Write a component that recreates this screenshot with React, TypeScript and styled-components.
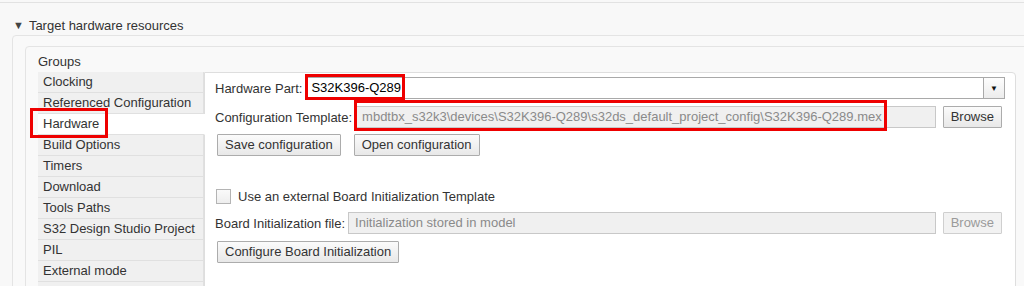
import React from 'react';
import styled, { createGlobalStyle } from 'styled-components';

const GlobalStyle = createGlobalStyle`
  html, body {
    margin: 0;
    padding: 0;
    background: #f8f8f8;
    overflow: hidden;
  }
  body {
    font-family: "Liberation Sans", Arial, sans-serif;
    font-size: 13px;
    color: #333;
  }
`;

const Page = styled.div`
  width: 1024px;
  height: 286px;
  overflow: hidden;
  padding-top: 2px;
  box-sizing: border-box;
`;

const TopRule = styled.div`
  border-top: 1px solid #e2e2e2;
  height: 12px;
`;

const SectionHeader = styled.div`
  display: flex;
  align-items: center;
  gap: 5px;
  height: 20px;
  padding-left: 13px;
  color: #333;
`;

const Caret = styled.span`
  font-size: 11px;
  color: #444;
`;

const OuterPanel = styled.div`
  margin: 0 -30px 0 12px;
  border: 1px solid #e4e4e4;
  border-radius: 4px;
  background: #f9f9f9;
  padding: 10px 0 0 12px;
  height: 260px;
`;

const InnerPanel = styled.div`
  border: 1px solid #e4e4e4;
  border-radius: 4px;
  background: #f9f9f9;
  padding: 6px 36px 0 12px;
  height: 260px;
`;

const GroupsTitle = styled.div`
  height: 19px;
  line-height: 18px;
  color: #333;
`;

const Body = styled.div`
  display: flex;
  align-items: flex-start;
`;

const GroupList = styled.ul`
  list-style: none;
  margin: 0;
  padding: 0;
  width: 166px;
  flex: none;
`;

const GroupItem = styled.li<{ $active?: boolean }>`
  position: relative;
  height: 20px;
  line-height: 20px;
  padding-left: 5px;
  background: ${p => (p.$active ? '#ffffff' : '#f0f0f0')};
  border-bottom: 1px solid #e0e0e0;
  border-right: 1px solid ${p => (p.$active ? '#ffffff' : '#e0e0e0')};
  color: #333;
  white-space: nowrap;
  margin-right: ${p => (p.$active ? '-1px' : '0')};
  z-index: ${p => (p.$active ? 2 : 1)};
`;

const Mark = styled.span<{ $top: number; $left: number; $right: number; $bottom: number }>`
  position: absolute;
  top: ${p => p.$top}px;
  left: ${p => p.$left}px;
  right: ${p => p.$right}px;
  bottom: ${p => p.$bottom}px;
  border: 3px solid #ee0000;
  pointer-events: none;
  z-index: 5;
`;

const ContentPanel = styled.div`
  flex: 1;
  background: #ffffff;
  border: 1px solid #dedede;
  border-radius: 0 4px 0 0;
  padding: 4px 10px 0 10px;
  height: 240px;
`;

const FieldRow = styled.div<{ $gapTop?: number }>`
  display: flex;
  align-items: center;
  gap: 7px;
  height: 22px;
  margin-top: ${p => p.$gapTop ?? 7}px;
`;

const LabelledField = styled.div`
  display: flex;
  align-items: center;
  flex: 1;
  min-width: 0;
`;

const Label = styled.span`
  color: #333;
  white-space: nowrap;
  margin-right: 3px;
`;

const Select = styled.div`
  position: relative;
  flex: 1;
  display: flex;
  height: 22px;
  box-sizing: border-box;
  border: 1px solid #a9a9a9;
  background: #fff;
`;

const SelectValue = styled.span`
  position: relative;
  flex: 1;
  line-height: 20px;
  padding-left: 5px;
  color: #000;
`;

const SelectArrow = styled.span`
  width: 20px;
  border-left: 1px solid #a9a9a9;
  display: flex;
  align-items: center;
  justify-content: center;
  font-size: 8px;
  color: #111;
  background: linear-gradient(#fdfdfd, #ececec);
`;

const TextField = styled.div`
  position: relative;
  flex: 1;
  height: 22px;
  box-sizing: border-box;
  border: 1px solid #c8c8c8;
  background: #f0f0f0;
  line-height: 20px;
  padding-left: 6px;
  color: #8a8a8a;
  white-space: nowrap;
`;

const Button = styled.button<{ $disabled?: boolean }>`
  display: block;
  height: 22px;
  box-sizing: border-box;
  margin: 0;
  padding: 0 7px;
  font-family: "Liberation Sans", Arial, sans-serif;
  font-size: 13px;
  line-height: 20px;
  color: ${p => (p.$disabled ? '#9a9a9a' : '#333')};
  border: 1px solid ${p => (p.$disabled ? '#cfcfcf' : '#acacac')};
  border-radius: 1px;
  background: ${p =>
    p.$disabled ? '#f2f2f2' : 'linear-gradient(#fbfbfb, #e8e8e8)'};
  flex: none;
  cursor: default;
`;

const ButtonRow = styled.div<{ $gapTop?: number }>`
  display: flex;
  gap: 13px;
  height: 22px;
  margin-top: ${p => p.$gapTop ?? 7}px;
  padding-left: 2px;
`;

const CheckRow = styled.label`
  display: flex;
  align-items: center;
  gap: 7px;
  height: 16px;
  margin-top: 32px;
  padding-left: 1px;
  color: #333;
`;

const CheckBox = styled.span`
  width: 13px;
  height: 13px;
  border: 1px solid #b4b4b4;
  background: linear-gradient(#fafafa, #eeeeee);
`;

const groups = [
  'Clocking',
  'Referenced Configuration',
  'Hardware',
  'Build Options',
  'Timers',
  'Download',
  'Tools Paths',
  'S32 Design Studio Project',
  'PIL',
  'External mode',
  '',
];

const App: React.FC = () => {
  return (
    <>
      <GlobalStyle />
      <Page>
        <TopRule />
        <SectionHeader>
          <Caret>▼</Caret>
          <span>Target hardware resources</span>
        </SectionHeader>
        <OuterPanel>
          <InnerPanel>
            <GroupsTitle>Groups</GroupsTitle>
            <Body>
              <GroupList>
                {groups.map((g, i) => (
                  <GroupItem key={i} $active={g === 'Hardware'}>
                    {g}
                    {g === 'Hardware' && <Mark $top={-6} $left={-8} $right={96} $bottom={-4} />}
                  </GroupItem>
                ))}
              </GroupList>
              <ContentPanel>
                <FieldRow $gapTop={0}>
                  <LabelledField>
                    <Label>Hardware Part:</Label>
                    <Select>
                      <SelectValue>
                        S32K396-Q289
                        <Mark $top={-4} $left={-1} $right={578} $bottom={-2} />
                      </SelectValue>
                      <SelectArrow>▼</SelectArrow>
                    </Select>
                  </LabelledField>
                </FieldRow>
                <FieldRow style={{ paddingRight: 3 }}>
                  <LabelledField>
                    <Label>Configuration Template:</Label>
                    <TextField>
                      mbdtbx_s32k3\devices\S32K396-Q289\s32ds_default_project_config\S32K396-Q289.mex
                      <Mark $top={-7} $left={-2} $right={48} $bottom={-4} />
                    </TextField>
                  </LabelledField>
                  <Button>Browse</Button>
                </FieldRow>
                <ButtonRow $gapTop={6}>
                  <Button>Save configuration</Button>
                  <Button>Open configuration</Button>
                </ButtonRow>
                <CheckRow>
                  <CheckBox />
                  <span>Use an external Board Initialization Template</span>
                </CheckRow>
                <FieldRow $gapTop={8} style={{ paddingRight: 3 }}>
                  <LabelledField>
                    <Label>Board Initialization file:</Label>
                    <TextField>Initialization stored in model</TextField>
                  </LabelledField>
                  <Button $disabled>Browse</Button>
                </FieldRow>
                <ButtonRow>
                  <Button>Configure Board Initialization</Button>
                </ButtonRow>
              </ContentPanel>
            </Body>
          </InnerPanel>
        </OuterPanel>
      </Page>
    </>
  );
};

export default App;
